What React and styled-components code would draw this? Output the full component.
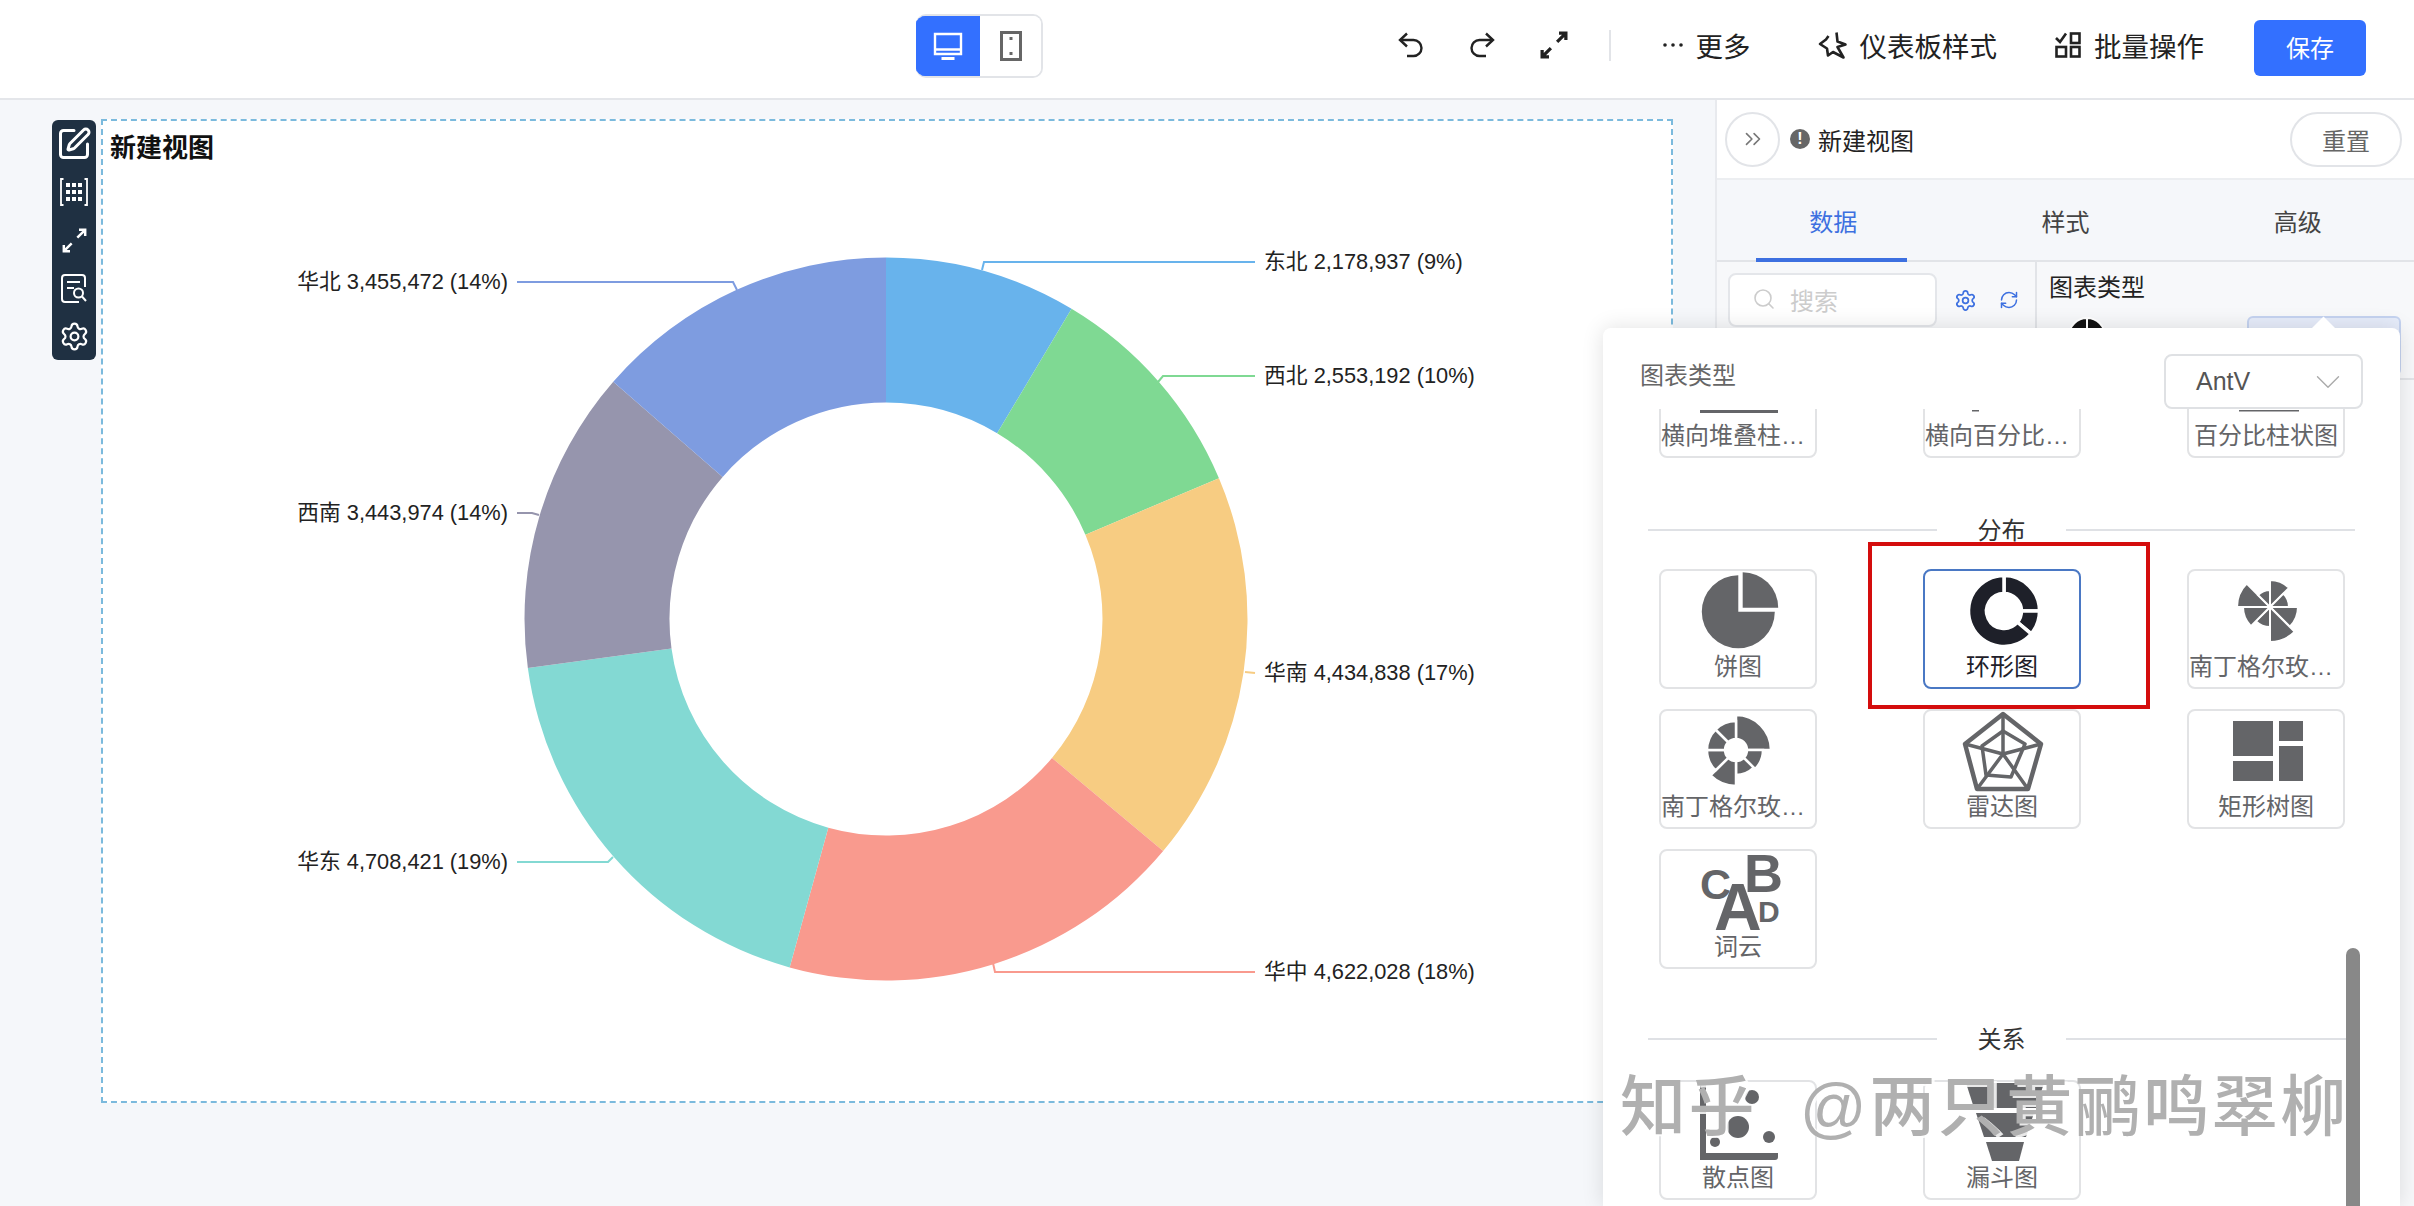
import React from 'react';
import styled, { createGlobalStyle } from 'styled-components';
import { ChevronDown, ChevronsRight, RefreshCw, Search, Settings, SquarePen } from 'lucide-react';

const FONT = '"Liberation Sans", "Noto Sans CJK SC", sans-serif';
const BLUE = '#3370ff';

const GlobalStyle = createGlobalStyle`
  html, body {
    margin: 0;
    padding: 0;
    background: #f5f7fa;
  }
  * {
    box-sizing: border-box;
  }
`;

const Page = styled.div`
  position: relative;
  width: 2414px;
  height: 1206px;
  overflow: hidden;
  display: flex;
  flex-direction: column;
  font-family: ${FONT};
  color: #222;
`;

/* top bar */
const Header = styled.header`
  height: 100px;
  flex: none;
  display: flex;
  align-items: flex-start;
  padding: 14px 48px 0 916px;
  background: #fff;
  border-bottom: 2px solid #e4e6ea;
`;

const DeviceToggle = styled.div`
  display: flex;
  height: 64px;
  border-radius: 10px;
  overflow: hidden;
  border: 2px solid #e2e4e8;
  border-left: 0;
`;

const DeviceButton = styled.div`
  display: flex;
  align-items: center;
  justify-content: center;
  height: 100%;
  width: ${(p) => (p.$active ? '64px' : '61px')};
  background: ${(p) => (p.$active ? BLUE : '#fff')};
  box-shadow: ${(p) => (p.$active ? `0 0 0 2px ${BLUE}` : 'none')};
  color: ${(p) => (p.$active ? '#fff' : '#666')};
`;

const Actions = styled.div`
  margin-left: auto;
  display: flex;
  align-items: center;
`;

const HistoryIcons = styled.div`
  display: flex;
  gap: 43px;
  align-items: center;
  color: #222;
  height: 62px;
`;

const Separator = styled.div`
  width: 2px;
  height: 31px;
  margin: 0 51px 0 40px;
  background: #e2e4e8;
`;

const ActionItem = styled.div`
  display: flex;
  align-items: center;
  gap: ${(p) => p.$gap || 12}px;
  margin-right: ${(p) => p.$after}px;
  font-size: 27.5px;
  height: 62px;
  white-space: nowrap;
`;

const SaveButton = styled.button`
  width: 112px;
  height: 56px;
  margin-top: 6px;
  padding: 0 0 4px;
  align-self: flex-start;
  border: 0;
  border-radius: 6px;
  background: ${BLUE};
  color: #fff;
  font-family: ${FONT};
  font-size: 24px;
`;

/* main area */
const Main = styled.div`
  flex: 1;
  display: flex;
  min-height: 0;
`;

const Canvas = styled.main`
  width: 1715px;
  flex: none;
  display: flex;
  align-items: flex-start;
  gap: 5px;
  padding: 19px 0 0 52px;
`;

const SideTools = styled.div`
  width: 44px;
  height: 240px;
  margin-top: 1px;
  display: grid;
  grid-auto-rows: 48px;
  place-items: center;
  background: #1f3042;
  border-radius: 6px;
  color: #fff;
`;

const ChartFrame = styled.section`
  width: 1572px;
  height: 984px;
  display: flex;
  flex-direction: column;
  background: #fff;
  border: 2px dashed #7bbadd;
`;

const ChartTitle = styled.h2`
  margin: 0;
  padding: 12px 7px 0;
  height: 40px;
  font-size: 26px;
  line-height: 30px;
  font-weight: 700;
  color: #111;
`;

const ChartSvg = styled.svg`
  display: block;
  width: 1568px;
  height: 940px;
`;

const ChartLabel = styled.text`
  font-family: ${FONT};
  font-size: 21.8px;
  fill: #222;
`;

/* right settings panel */
const Panel = styled.aside`
  flex: 1;
  display: flex;
  flex-direction: column;
  background: #f7f8fa;
  border-left: 2px solid #e8eaee;
`;

const PanelHeader = styled.div`
  height: 80px;
  flex: none;
  display: flex;
  align-items: center;
  padding: 0 12px 0 8px;
  background: #fff;
  border-bottom: 2px solid #eceef1;
  font-size: 24px;
`;

const CircleButton = styled.div`
  width: 55px;
  height: 55px;
  margin-right: 10px;
  display: flex;
  align-items: center;
  justify-content: center;
  border: 2px solid #e2e4e8;
  border-radius: 50%;
  color: #777;
`;

const AlertDot = styled.span`
  width: 20px;
  height: 20px;
  margin-right: 8px;
  display: flex;
  align-items: center;
  justify-content: center;
  border-radius: 50%;
  background: #666;
  color: #fff;
  font-size: 16px;
  font-weight: 700;
`;

const ResetButton = styled.div`
  margin-left: auto;
  width: 112px;
  height: 55px;
  display: flex;
  align-items: center;
  justify-content: center;
  border: 2px solid #e2e4e8;
  border-radius: 28px;
  color: #666;
`;

const Tabs = styled.div`
  height: 82px;
  flex: none;
  display: grid;
  grid-template-columns: repeat(3, 1fr);
  background: #f5f7fa;
  border-bottom: 2px solid #e2e4e8;
`;

const Tab = styled.div`
  position: relative;
  display: flex;
  align-items: center;
  justify-content: center;
  font-size: 24px;
  color: ${(p) => (p.$active ? '#3d70e0' : '#444')};

  ${(p) => p.$active && `
    &::after {
      content: '';
      position: absolute;
      left: 39px;
      right: 42px;
      bottom: -2px;
      height: 4px;
      background: #3d70e0;
    }
  `}
`;

const PanelBody = styled.div`
  flex: 1;
  display: flex;
  min-height: 0;
`;

const FieldColumn = styled.div`
  width: 320px;
  flex: none;
  display: flex;
  align-items: flex-start;
  padding: 11px 0 0 11px;
  border-right: 2px solid #e2e4e8;
  color: #3d70e0;
`;

const SearchBox = styled.div`
  width: 209px;
  height: 54px;
  margin-right: 17px;
  display: flex;
  align-items: center;
  gap: 14px;
  padding: 0 0 2px 22px;
  background: #fff;
  border: 2px solid #e4e6ea;
  border-radius: 8px;
  color: #ccc;
  font-size: 24px;
`;

const FieldTools = styled.div`
  height: 54px;
  display: flex;
  align-items: center;
  gap: 22px;
`;

const TypeColumn = styled.div`
  flex: 1;
  height: 118px;
  padding: 12px 13px 0 12px;
  border-bottom: 2px solid #e2e4e8;
  font-size: 24px;
  line-height: 28px;
`;

const TypeRow = styled.div`
  display: flex;
  align-items: flex-start;
  justify-content: space-between;
  margin-top: 14px;
  padding-left: 18px;
`;

const TypeChip = styled.div`
  width: 154px;
  height: 60px;
  background: #e6ecfa;
  border: 2px solid #c5d3f0;
  border-radius: 6px;
`;

/* chart type popover */
const Popover = styled.div`
  position: absolute;
  top: 328px;
  left: 1603px;
  width: 797px;
  height: 878px;
  display: flex;
  flex-direction: column;
  background: #fff;
  border-radius: 8px 8px 0 0;
  box-shadow: 0 0 22px rgba(0, 0, 0, 0.12);

  &::before {
    content: '';
    position: absolute;
    top: -8px;
    left: 712px;
    width: 17px;
    height: 17px;
    background: #fff;
    transform: rotate(45deg);
  }
`;

const PopoverHead = styled.div`
  position: relative;
  z-index: 2;
  height: 81px;
  flex: none;
  display: flex;
  justify-content: space-between;
  align-items: flex-start;
  padding: 26px 37px 0 37px;
`;

const PopoverTitle = styled.div`
  margin-top: 8px;
  font-size: 24px;
  line-height: 28px;
  color: #666;
`;

const Select = styled.div`
  width: 199px;
  height: 55px;
  display: flex;
  align-items: center;
  justify-content: space-between;
  padding: 0 12px 0 30px;
  background: #fff;
  border: 2px solid #dfe1e4;
  border-radius: 8px;
  font-size: 25px;
  color: #555;
`;

const TypeList = styled.div`
  flex: 1;
  min-height: 0;
  overflow: hidden;
  padding: 0 56px;
`;

const TypeListInner = styled.div`
  margin-top: -71px;
`;

const CardGrid = styled.div`
  display: grid;
  grid-template-columns: repeat(3, 158px);
  gap: 20px 106px;
`;

const SectionTitle = styled.div`
  display: flex;
  align-items: center;
  height: 24px;
  margin: ${(p) => (p.$tight ? '58px -11px 29px' : '60px -11px 27px')};
  font-size: 24px;
  color: #333;
`;

const SectionRule = styled.div`
  flex: 1;
  height: 2px;
  background: #dfe1e5;
`;

const SectionName = styled.div`
  width: 129px;
  margin-top: -3px;
  text-align: center;
`;

const Card = styled.div`
  position: relative;
  height: 120px;
  min-width: 0;
  display: flex;
  flex-direction: column;
  align-items: center;
  background: #fff;
  border: 2px solid ${(p) => (p.$active ? '#4a78c4' : '#e2e3e5')};
  border-radius: 8px;
  color: ${(p) => (p.$active ? '#1e2029' : '#646568')};
`;

const CardLabel = styled.div`
  width: 100%;
  margin-top: 1px;
  font-size: 24px;
  line-height: 30px;
  text-align: center;
  white-space: nowrap;
  overflow: hidden;
  text-overflow: ellipsis;
`;

const CardIcon = styled.svg`
  display: block;
  flex: none;
  width: 80px;
  height: 80px;
  overflow: visible;
`;

const RedMark = styled.div`
  position: absolute;
  top: -29px;
  left: -57px;
  right: -71px;
  bottom: -22px;
  border: 4px solid #d40d0d;
  pointer-events: none;
`;

const ScrollThumb = styled.div`
  position: absolute;
  left: 743px;
  top: 620px;
  bottom: 0;
  width: 14px;
  border-radius: 7px 7px 0 0;
  background: #888;
`;

const Watermark = styled.div`
  position: absolute;
  left: 1620px;
  top: 1062px;
  font-size: 66px;
  font-weight: 500;
  line-height: 90px;
  letter-spacing: 2.5px;
  word-spacing: 22px;
  white-space: pre;
  color: #b0b0b0;
  text-shadow: 3px 2px 0 rgba(255, 255, 255, 0.85);
  pointer-events: none;
`;

// chart data, coordinates are page pixels (viewBox matches them)
const CX = 886;
const CY = 619;
const regions = [
  { name: '东北', value: 2178937, pct: 9, color: '#68b3ec', side: 'r', y: 261, line: '982,270 984,262 1255,262' },
  { name: '西北', value: 2553192, pct: 10, color: '#7fd993', side: 'r', y: 375, line: '1158,382 1163,376 1255,376' },
  { name: '华南', value: 4434838, pct: 17, color: '#f7cc82', side: 'r', y: 672, line: '1245,672 1255,673' },
  { name: '华中', value: 4622028, pct: 18, color: '#f99a8e', side: 'r', y: 971, line: '993,963 995,972 1255,972' },
  { name: '华东', value: 4708421, pct: 19, color: '#83d9d3', side: 'l', y: 861, line: '613,857 608,862 517,862' },
  { name: '西南', value: 3443974, pct: 14, color: '#9695ad', side: 'l', y: 512, line: '539,515 532,513 517,513' },
  { name: '华北', value: 3455472, pct: 14, color: '#7e9ce0', side: 'l', y: 281, line: '737,290 733,282 517,282' },
];
const total = regions.reduce((sum, r) => sum + r.value, 0);

const polar = (cx, cy, r, deg) => {
  const a = (deg * Math.PI) / 180;
  return [cx + r * Math.sin(a), cy - r * Math.cos(a)];
};

const wedge = (cx, cy, R, r, a0, a1) => {
  const big = a1 - a0 > 180 ? 1 : 0;
  const [x0, y0] = polar(cx, cy, R, a0);
  const [x1, y1] = polar(cx, cy, R, a1);
  if (!r) return `M${cx} ${cy}L${x0} ${y0}A${R} ${R} 0 ${big} 1 ${x1} ${y1}Z`;
  const [x2, y2] = polar(cx, cy, r, a1);
  const [x3, y3] = polar(cx, cy, r, a0);
  return `M${x0} ${y0}A${R} ${R} 0 ${big} 1 ${x1} ${y1}L${x2} ${y2}A${r} ${r} 0 ${big} 0 ${x3} ${y3}Z`;
};

const DonutChart = () => {
  let angle = 0;
  return (
    <ChartSvg viewBox="103 161 1568 940">
      {regions.map((r) => {
        const from = angle;
        angle += (r.value / total) * 360;
        return <path key={r.name} d={wedge(CX, CY, 361.5, 216.5, from, angle)} fill={r.color} />;
      })}
      {regions.map((r) => (
        <g key={r.name}>
          <polyline points={r.line} fill="none" stroke={r.color} strokeWidth="2" />
          <ChartLabel
            x={r.side === 'r' ? 1264 : 508}
            y={r.y}
            dominantBaseline="central"
            textAnchor={r.side === 'r' ? 'start' : 'end'}
          >
            {`${r.name} ${r.value.toLocaleString('en-US')} (${r.pct}%)`}
          </ChartLabel>
        </g>
      ))}
    </ChartSvg>
  );
};

/* small drawn icons */
const MonitorIcon = () => (
  <svg width="30" height="28" viewBox="0 0 30 28" fill="none" stroke="currentColor" strokeWidth="2.4">
    <path d="M2 2h26v20H2z" />
    <path d="M2 17.5h26" />
    <path d="M8.5 26.5h13" strokeWidth="3" />
  </svg>
);

const PhoneIcon = () => (
  <svg width="22" height="30" viewBox="0 0 22 30" fill="none" stroke="currentColor" strokeWidth="3">
    <path d="M1.5 1.5h19v27h-19z" />
    <path d="M9.5 7.5h3M9.5 22.5h3" />
  </svg>
);

const UndoIcon = () => (
  <svg width="28" height="26" viewBox="0 0 28 26" fill="none" stroke="currentColor" strokeWidth="2.4">
    <path d="M10 1.500L3 8l7 6.500" />
    <path d="M3 8h13.500a8 8 0 0 1 0 16H10" />
  </svg>
);

const RedoIcon = () => (
  <svg width="28" height="26" viewBox="0 0 28 26" fill="none" stroke="currentColor" strokeWidth="2.4">
    <path d="M18 1.500L25 8l-7 6.500" />
    <path d="M25 8H11.500a8 8 0 0 0 0 16H18" />
  </svg>
);

const ExpandIcon = ({ size = 28, width = 2.6 }) => (
  <svg width={size} height={size} viewBox="0 0 24 24" fill="none" stroke="currentColor" strokeWidth={width}>
    <path d="M16 2.5h5.5V8M21.5 2.5l-7 7" />
    <path d="M2.5 16v5.5H8M2.5 21.5l7-7" />
  </svg>
);

const DotsIcon = () => (
  <svg width="22" height="6" viewBox="0 0 22 6" fill="currentColor">
    <circle cx="3" cy="3" r="1.8" />
    <circle cx="11" cy="3" r="1.8" />
    <circle cx="19" cy="3" r="1.8" />
  </svg>
);

const StarIcon = () => (
  <svg width="30" height="28" viewBox="0 0 29 28" fill="none" stroke="currentColor" strokeWidth="2.6" strokeLinejoin="round">
    <path d="M18 1.500l1 9 8 3-8 2.500 6 10.500-10.500-5.500-5 3.500-1-7L1.500 13l6-4.500L10 5" />
  </svg>
);

const BatchIcon = () => (
  <svg width="26" height="26" viewBox="0 0 26 26" fill="none" stroke="currentColor" strokeWidth="2.6">
    <path d="M1 6l4 4 6-8.500" />
    <rect x="16" y="1.500" width="8.500" height="9.500" />
    <rect x="1.500" y="15" width="9.500" height="9.500" />
    <rect x="16" y="15" width="8.500" height="9.500" />
  </svg>
);

const GridIcon = () => (
  <svg width="28" height="28" viewBox="0 0 28 28" fill="none" stroke="currentColor">
    <path d="M3.500 1H1v26h2.500M24.500 1H27v26h-2.500" strokeWidth="1.800" />
    <g fill="currentColor" stroke="none">
      {[5, 12, 19].map((y) =>
        [6, 12, 18].map((x) => <rect key={`${x}-${y}`} x={x} y={y} width="4" height="4" />),
      )}
    </g>
  </svg>
);

const ReportIcon = () => (
  <svg width="26" height="29" viewBox="0 0 26 29" fill="none" stroke="currentColor" strokeWidth="2">
    <path d="M24 13V4a3 3 0 0 0-3-3H4a3 3 0 0 0-3 3v21a3 3 0 0 0 3 3h14" />
    <path d="M6 8h13M6 14h7" />
    <circle cx="17.500" cy="19" r="4.500" />
    <path d="M21 22.500l4 4.500" />
  </svg>
);

/* chart type card icons, 80x80 */
const PieIcon = () => (
  <CardIcon viewBox="0 0 80 80" fill="currentColor">
    <path d={wedge(40.3, 40.7, 36.5, 0, 90, 360)} />
    <path d={wedge(44.7, 36.7, 35.5, 0, 0, 90)} />
  </CardIcon>
);

const RingIcon = () => (
  <CardIcon viewBox="0 0 80 80" fill="currentColor" stroke="#fff" strokeWidth="3.5">
    <path d={wedge(42, 40, 35.5, 17.500, 0, 90)} />
    <path d={wedge(42, 40, 35.5, 17.500, 90, 130)} />
    <path d={wedge(42, 40, 35.5, 17.500, 130, 360)} />
  </CardIcon>
);

const RoseIcon = () => (
  <CardIcon viewBox="0 0 80 80" fill="currentColor" stroke="#fff" strokeWidth="2">
    {[27, 19, 28, 35, 20, 27, 33, 17].map((r, i) => (
      <path key={i} d={wedge(44, 36, r, 0, i * 45, i * 45 + 45)} />
    ))}
  </CardIcon>
);

const RoseRingIcon = () => (
  <CardIcon viewBox="0 0 80 80" fill="currentColor" stroke="#fff" strokeWidth="2.500">
    <path d={wedge(38, 39, 35, 11, 0, 90)} />
    <path d={wedge(38, 39, 27, 11, 90, 135)} />
    <path d={wedge(38, 39, 25, 11, 135, 180)} />
    <path d={wedge(38, 39, 36, 11, 180, 225)} />
    <path d={wedge(38, 39, 29, 11, 225, 270)} />
    <path d={wedge(38, 39, 29, 11, 270, 315)} />
    <path d={wedge(38, 39, 29, 11, 315, 360)} />
  </CardIcon>
);

const RadarIcon = () => (
  <CardIcon viewBox="0 0 80 80" fill="none" stroke="currentColor" strokeLinejoin="round">
    <path d="M41 3l38 30-13 45H15L3 33z" strokeWidth="4.500" />
    <path d="M41 3v40M79 33L41 43M66 78L41 43M15 78l26-35M3 33l38 10" strokeWidth="3.500" />
    <path d="M41 20l22 13-14 33-25-2-4-29z" strokeWidth="3.500" />
  </CardIcon>
);

const TreemapIcon = () => (
  <CardIcon viewBox="0 0 80 80" fill="currentColor">
    <rect x="7" y="10" width="40" height="35" />
    <rect x="53" y="10" width="24" height="20" />
    <rect x="53" y="35" width="24" height="35" />
    <rect x="7" y="50" width="40" height="20" />
  </CardIcon>
);

const CloudLetter = styled.text`
  font-family: ${FONT};
  font-weight: 700;
  fill: currentColor;
`;

const WordCloudIcon = () => (
  <CardIcon viewBox="0 0 80 80">
    <CloudLetter x="46" y="41" fontSize="54">B</CloudLetter>
    <CloudLetter x="2" y="48" fontSize="43">C</CloudLetter>
    <CloudLetter x="16" y="79" fontSize="66">A</CloudLetter>
    <CloudLetter x="60" y="71" fontSize="30">D</CloudLetter>
  </CardIcon>
);

const ScatterIcon = () => (
  <CardIcon viewBox="0 0 80 80" fill="currentColor">
    <path d="M2 0h6v71h72v4a3 3 0 0 1-3 3H2z" />
    <circle cx="17" cy="60" r="5" />
    <circle cx="40" cy="45" r="11" />
    <circle cx="71" cy="55" r="6" />
    <circle cx="54" cy="15" r="7" />
  </CardIcon>
);

const FunnelIcon = () => (
  <CardIcon viewBox="0 0 80 80" fill="currentColor">
    <path d="M4 1h78L74 26H12z" />
    <path d="M14 31h58l-8 24H22z" />
    <path d="M24 60h38l-5 19H30z" />
  </CardIcon>
);

const StubIcon = ({ x, width, height }) => (
  <CardIcon viewBox="0 0 80 80" fill="currentColor">
    <rect x={x} y={70} width={width} height={height} />
  </CardIcon>
);

const ChartCard = ({ label, active, children }) => (
  <Card $active={active}>
    {children}
    <CardLabel>{label}</CardLabel>
    {active && <RedMark />}
  </Card>
);

const SectionHeading = ({ name, tight }) => (
  <SectionTitle $tight={tight}>
    <SectionRule />
    <SectionName>{name}</SectionName>
    <SectionRule />
  </SectionTitle>
);

const App = () => {
  return (
    <Page>
      <GlobalStyle />
      <Header>
        <DeviceToggle>
          <DeviceButton $active>
            <MonitorIcon />
          </DeviceButton>
          <DeviceButton>
            <PhoneIcon />
          </DeviceButton>
        </DeviceToggle>
        <Actions>
          <HistoryIcons>
            <UndoIcon />
            <RedoIcon />
            <ExpandIcon size={30} />
          </HistoryIcons>
          <Separator />
          <ActionItem $after={67}>
            <DotsIcon />
            更多
          </ActionItem>
          <ActionItem $after={58}>
            <StarIcon />
            仪表板样式
          </ActionItem>
          <ActionItem $after={50} $gap={13}>
            <BatchIcon />
            批量操作
          </ActionItem>
          <SaveButton>保存</SaveButton>
        </Actions>
      </Header>

      <Main>
        <Canvas>
          <SideTools>
            <SquarePen size={36} strokeWidth={2} />
            <GridIcon />
            <ExpandIcon size={27} width={2.2} />
            <ReportIcon />
            <Settings size={31} strokeWidth={1.7} />
          </SideTools>
          <ChartFrame>
            <ChartTitle>新建视图</ChartTitle>
            <DonutChart />
          </ChartFrame>
        </Canvas>

        <Panel>
          <PanelHeader>
            <CircleButton>
              <ChevronsRight size={26} strokeWidth={1.5} />
            </CircleButton>
            <AlertDot>!</AlertDot>
            新建视图
            <ResetButton>重置</ResetButton>
          </PanelHeader>
          <Tabs>
            <Tab $active>数据</Tab>
            <Tab>样式</Tab>
            <Tab>高级</Tab>
          </Tabs>
          <PanelBody>
            <FieldColumn>
              <SearchBox>
                <Search size={24} strokeWidth={1.6} />
                搜索
              </SearchBox>
              <FieldTools>
                <Settings size={23} strokeWidth={1.8} />
                <RefreshCw size={20} strokeWidth={1.8} />
              </FieldTools>
            </FieldColumn>
            <TypeColumn>
              图表类型
              <TypeRow>
                <svg width="40" height="40" viewBox="0 0 40 40" fill="#111" stroke="#fff" strokeWidth="2">
                  <path d={wedge(20, 20, 18, 0, 0, 180)} />
                  <path d={wedge(20, 20, 18, 0, 180, 360)} />
                </svg>
                <TypeChip />
              </TypeRow>
            </TypeColumn>
          </PanelBody>
        </Panel>
      </Main>

      <Popover>
        <PopoverHead>
          <PopoverTitle>图表类型</PopoverTitle>
          <Select>
            AntV
            <ChevronDown size={42} strokeWidth={0.8} color="#aaa" />
          </Select>
        </PopoverHead>
        <TypeList>
          <TypeListInner>
            <CardGrid>
              <ChartCard label="横向堆叠柱状图">
                <StubIcon x={2} width={78} height={3} />
              </ChartCard>
              <ChartCard label="横向百分比柱状图">
                <StubIcon x={10} width={7} height={1.5} />
              </ChartCard>
              <ChartCard label="百分比柱状图">
                <StubIcon x={13} width={60} height={1.5} />
              </ChartCard>
            </CardGrid>

            <SectionHeading name="分布" />
            <CardGrid>
              <ChartCard label="饼图">
                <PieIcon />
              </ChartCard>
              <ChartCard label="环形图" active>
                <RingIcon />
              </ChartCard>
              <ChartCard label="南丁格尔玫瑰图">
                <RoseIcon />
              </ChartCard>
              <ChartCard label="南丁格尔玫瑰环图">
                <RoseRingIcon />
              </ChartCard>
              <ChartCard label="雷达图">
                <RadarIcon />
              </ChartCard>
              <ChartCard label="矩形树图">
                <TreemapIcon />
              </ChartCard>
              <ChartCard label="词云">
                <WordCloudIcon />
              </ChartCard>
            </CardGrid>

            <SectionHeading name="关系" tight />
            <CardGrid>
              <ChartCard label="散点图">
                <ScatterIcon />
              </ChartCard>
              <ChartCard label="漏斗图">
                <FunnelIcon />
              </ChartCard>
            </CardGrid>
          </TypeListInner>
        </TypeList>
        <ScrollThumb />
      </Popover>

      <Watermark>知乎 @两只黄鹂鸣翠柳</Watermark>
    </Page>
  );
};

export default App;
